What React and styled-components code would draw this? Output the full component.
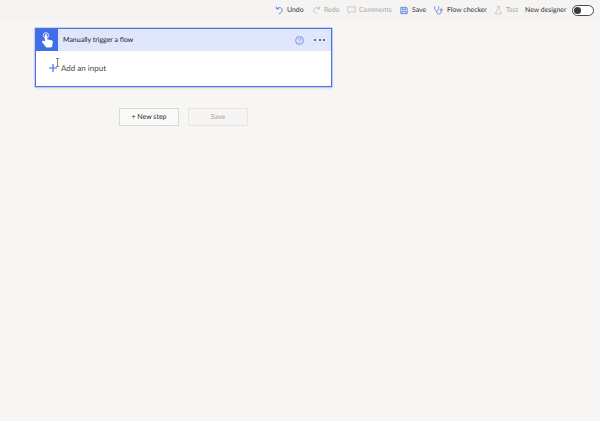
import React from "react";
import styled, { createGlobalStyle } from "styled-components";

const Global = createGlobalStyle`
  html, body { margin: 0; padding: 0; }
  body {
    background: #f7f6f5;
    font-family: Lato, "Open Sans", "Liberation Sans", sans-serif;
    text-rendering: geometricPrecision;
  }
`;

const Page = styled.div`
  width: 600px;
  height: 421px;
  overflow: hidden;
  background: #f7f6f5;
  display: flex;
  flex-direction: column;
`;

const Toolbar = styled.div`
  height: 20px;
  display: flex;
  align-items: center;
  padding-left: 275px;
  background: #f5f4f3;
`;

const ToolItem = styled.div`
  display: flex;
  align-items: center;
  gap: ${(p) => p.$gap ?? 3}px;
  width: ${(p) => p.$w}px;
  flex: none;
  font-size: 6.9px;
  line-height: 12px;
  white-space: nowrap;
  color: ${(p) => (p.$off ? "#a6a5a4" : "#323130")};
`;

const Switch = styled.div`
  width: 19px;
  height: 9px;
  border: 1px solid #4a4948;
  border-radius: 6px;
  background: #fff;
  display: flex;
  align-items: center;
  padding-left: 1px;
  &::before {
    content: "";
    width: 7px;
    height: 7px;
    border-radius: 50%;
    background: #3b3a39;
  }
`;

const Card = styled.div`
  margin: 8px 0 0 35px;
  width: 295px;
  border: 1px solid #4a71e6;
  box-shadow: 0 0 0 0.5px #9fb4f0, 0 1px 3px rgba(0, 0, 0, 0.12);
  background: #fff;
`;

const CardHeader = styled.div`
  height: 22px;
  display: flex;
  align-items: center;
  background: #e0e6fb;
`;

const IconTile = styled.div`
  width: 22px;
  height: 22px;
  background: #3f6ee8;
  display: flex;
  align-items: center;
  justify-content: center;
`;

const CardTitle = styled.div`
  flex: 1;
  margin-left: 5px;
  font-size: 7px;
  color: #201f1e;
`;

const Help = styled.div`
  margin-right: 10px;
  display: flex;
`;

const More = styled.div`
  display: flex;
  gap: 2.5px;
  margin-right: 6px;
`;

const Dot = styled.span`
  width: 2px;
  height: 2px;
  border-radius: 50%;
  background: #3b4a6b;
`;

const CardBody = styled.div`
  height: 33px;
  padding-bottom: 2px;
  display: flex;
  align-items: center;
  padding-left: 13px;
  position: relative;
`;

const AddLabel = styled.span`
  font-size: 8px;
  color: #4a4948;
  margin-left: 4px;
`;

const Cursor = styled.svg`
  position: absolute;
  left: 18.5px;
  top: 7px;
`;

const Actions = styled.div`
  display: flex;
  gap: 9px;
  margin: 21px 0 0 119px;
`;

const StepButton = styled.div`
  width: 58px;
  height: 16px;
  border: 1px solid ${(p) => (p.$off ? "#e6e5e3" : "#d9d8d6")};
  background: ${(p) => (p.$off ? "#f6f5f4" : "#fafaf9")};
  display: flex;
  align-items: center;
  justify-content: center;
  font-size: 7px;
  color: ${(p) => (p.$off ? "#a6a5a4" : "#323130")};
`;

const blue = "#4a6fd8";

const Svg = ({ w = 9, h = 10, vb = "0 0 10 10", children }) => (
  <svg width={w} height={h} viewBox={vb} fill="none">{children}</svg>
);

export default function App() {
  return (
    <Page>
      <Global />
      <Toolbar>
        <ToolItem $w={37}>
          <Svg>
            <path d="M1.5 1.2 L1.8 4 L4.5 3.6 M1.9 3.8 C3.5 1.6 7.6 1.8 8 5 C8.2 7 6.5 8.6 4.2 9" stroke={blue} strokeWidth="0.9" />
          </Svg>
          Undo
        </ToolItem>
        <ToolItem $w={35} $off>
          <Svg>
            <path d="M8.5 1.2 L8.2 4 L5.5 3.6 M8.1 3.8 C6.5 1.6 2.4 1.8 2 5 C1.8 7 3.5 8.6 5.8 9" stroke="#b4b3b2" strokeWidth="0.8" />
          </Svg>
          Redo
        </ToolItem>
        <ToolItem $w={53} $off>
          <Svg>
            <path d="M0.8 1.5 H9.2 V7 H4 L2 9 V7 H0.8 Z" stroke="#b4b3b2" strokeWidth="0.7" />
          </Svg>
          Comments
        </ToolItem>
        <ToolItem $w={34} $gap={4}>
          <Svg w={8} h={9}>
            <path d="M1 1 H8 L9 2 V9 H1 Z" fill="#dfe6fa" stroke={blue} strokeWidth="0.9" />
            <path d="M2.8 1 V3.6 H7 V1 M2.6 9 V6 H7.4 V9" stroke={blue} strokeWidth="0.9" />
          </Svg>
          Save
        </ToolItem>
        <ToolItem $w={60}>
          <Svg w={10} h={10} vb="0 0 11 10">
            <path d="M1 1 H0.8 V3.5 C0.8 5 2 6 3 6 C4 6 5.2 5 5.2 3.5 V1 H5 M3 6 V7.5 C3 8.8 4 9.4 5.5 9.4 C7 9.4 8 8.6 8 7.2 V6.2" stroke={blue} strokeWidth="0.8" />
            <circle cx="8" cy="5" r="1.2" stroke={blue} strokeWidth="0.8" />
          </Svg>
          Flow checker
        </ToolItem>
        <ToolItem $w={31} $off>
          <Svg>
            <path d="M3.8 1 H6.2 M4.2 1 V4 L1.6 8.6 C1.4 9 1.6 9.3 2 9.3 H8 C8.4 9.3 8.6 9 8.4 8.6 L5.8 4 V1" stroke="#b4b3b2" strokeWidth="0.7" />
          </Svg>
          Test
        </ToolItem>
        <ToolItem $gap={5}>
          New designer
          <Switch />
        </ToolItem>
      </Toolbar>
      <Card>
        <CardHeader>
          <IconTile>
            <svg width="13" height="16" viewBox="0 0 13 16" fill="none">
              <circle cx="5" cy="3.4" r="2.7" stroke="#fff" strokeWidth="0.8" />
              <path d="M3.8 3.4 C3.8 1.8 6.2 1.8 6.2 3.4 V7.2 L10.4 8.2 C11.6 8.5 12 9.2 11.8 10.2 L11.2 14 C11 15 10.4 15.4 9.6 15.4 H6 C5.3 15.4 4.8 15 4.4 14.4 L1.2 10.2 C0.6 9.3 1.8 8.2 2.8 9 L3.8 9.8 Z" fill="#fff" />
            </svg>
          </IconTile>
          <CardTitle>Manually trigger a flow</CardTitle>
          <Help>
            <svg width="9" height="9" viewBox="0 0 9 9" fill="none">
              <circle cx="4.5" cy="4.5" r="3.9" stroke="#5b7be0" strokeWidth="0.8" />
              <path d="M3.3 3.5 C3.3 2.2 5.7 2.2 5.7 3.5 C5.7 4.4 4.5 4.4 4.5 5.4" stroke="#5b7be0" strokeWidth="0.7" />
              <circle cx="4.5" cy="6.6" r="0.45" fill="#5b7be0" />
            </svg>
          </Help>
          <More><Dot /><Dot /><Dot /></More>
        </CardHeader>
        <CardBody>
          <svg width="8" height="8" viewBox="0 0 8 8" fill="none">
            <path d="M4 0 V8 M0 4 H8" stroke="#3f6ee8" strokeWidth="1.2" />
          </svg>
          <AddLabel>Add an input</AddLabel>
          <Cursor width="5" height="9" viewBox="0 0 5 9" fill="none">
            <path d="M0.8 0.5 H4.2 M2.5 0.5 V8.5 M0.8 8.5 H4.2" stroke="#555" strokeWidth="0.7" />
          </Cursor>
        </CardBody>
      </Card>
      <Actions>
        <StepButton>+ New step</StepButton>
        <StepButton $off>Save</StepButton>
      </Actions>
    </Page>
  );
}
